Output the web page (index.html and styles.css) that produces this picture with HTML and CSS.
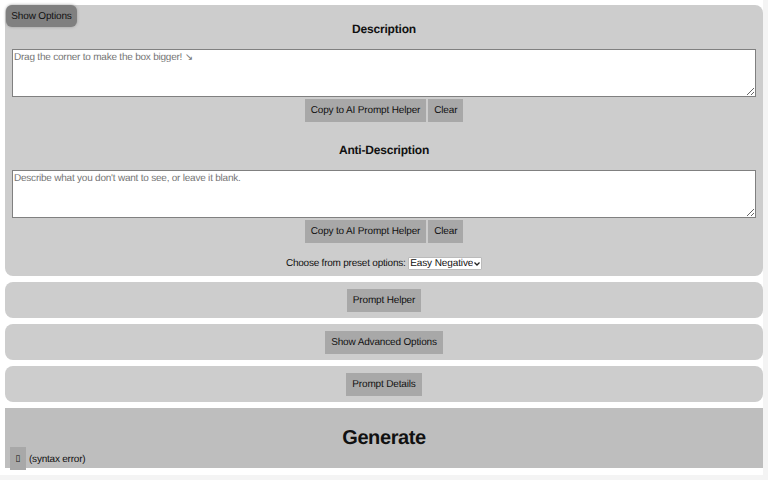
FILE: index.html
```html
<!DOCTYPE html>
<html lang="en">
<head>
  <meta charset="UTF-8">
  <meta name="viewport" content="width=device-width, initial-scale=1.0">
  <title>Prompt Page</title>
  <link rel="stylesheet" href="styles.css">
</head>
<body>

  <button class="show-options">Show Options</button>

  <div class="page">
    <div class="panel prompts">
      <div class="prompt-title">Description</div>
      <textarea class="prompt-box" placeholder="Drag the corner to make the box bigger! ↘"></textarea>
      <div class="button-row">
        <button class="btn">Copy to AI Prompt Helper</button>
        <button class="btn">Clear</button>
      </div>

      <div class="prompt-title second">Anti-Description</div>
      <textarea class="prompt-box" placeholder="Describe what you don't want to see, or leave it blank."></textarea>
      <div class="button-row">
        <button class="btn">Copy to AI Prompt Helper</button>
        <button class="btn">Clear</button>
      </div>

      <div class="preset-row">
        <label for="preset">Choose from preset options:</label>
        <span class="select-wrap">
          <select id="preset">
            <option>Easy Negative</option>
          </select>
          <svg class="select-arrow" width="6" height="4" viewBox="0 0 6 4"><path d="M0.5 0.5 L3 3 L5.5 0.5" fill="none" stroke="#222" stroke-width="1.3"/></svg>
        </span>
      </div>
    </div>

    <div class="panel single"><button class="btn">Prompt Helper</button></div>
    <div class="panel single"><button class="btn">Show Advanced Options</button></div>
    <div class="panel single"><button class="btn">Prompt Details</button></div>

    <div class="generate">Generate</div>
  </div>

  <div class="status">
    <button class="btn status-btn">▯</button>
    <span class="status-text">(syntax error)</span>
  </div>

</body>
</html>
```

FILE: styles.css
```css
html {
  background-color: #f4f4f4;
}

body {
  font-family: "Liberation Sans", Arial, sans-serif;
  font-size: 10px;
  letter-spacing: -0.22px;
  color: #111;
  background-color: #fff;
  margin: 0 5px 5px 0;
  height: 475px;
  overflow: hidden;
  position: relative;
  text-rendering: geometricPrecision;
}

.page {
  display: flex;
  flex-direction: column;
  gap: 6px;
  padding: 5px 0 0 5px;
}

.panel {
  background-color: #cdcdcd;
  border-radius: 8px;
  text-align: center;
}

.prompts {
  height: 271px;
  padding: 0 7px;
  box-sizing: border-box;
}

.prompt-title {
  font-size: 12px;
  letter-spacing: -0.2px;
  font-weight: bold;
  line-height: 15px;
  padding-top: 17px;
  margin-bottom: 12px;
}

.prompt-title.second {
  padding-top: 21px;
}

.prompt-box {
  display: block;
  width: 100%;
  height: 48px;
  box-sizing: border-box;
  margin: 0;
  padding: 2px 1px 1px;
  border: 1px solid #808080;
  background-color: #fff;
  font-family: "Liberation Sans", Arial, sans-serif;
  font-size: 10px;
  letter-spacing: -0.22px;
  text-rendering: geometricPrecision;
}

.button-row {
  display: flex;
  justify-content: center;
  gap: 2px;
  margin-top: 2px;
}

.btn {
  height: 23px;
  padding: 0 6px;
  border: none;
  background-color: #a8a8a8;
  color: #111;
  font-family: "Liberation Sans", Arial, sans-serif;
  font-size: 10px;
  letter-spacing: -0.16px;
  text-rendering: geometricPrecision;
}

.preset-row {
  margin-top: 14px;
  line-height: 14px;
}

.select-wrap {
  position: relative;
  display: inline-block;
  vertical-align: top;
  height: 14px;
}

select {
  appearance: none;
  width: 74px;
  height: 13px;
  margin: 0;
  padding: 0 8px 0 1px;
  border: 1px solid #bbb;
  border-radius: 1px;
  background-color: #fff;
  color: #111;
  font-family: "Liberation Sans", Arial, sans-serif;
  font-size: 10px;
  letter-spacing: -0.1px;
  text-rendering: geometricPrecision;
}

.select-arrow {
  position: absolute;
  right: 2px;
  top: 5px;
}

.single {
  height: 36px;
  display: flex;
  justify-content: center;
  align-items: center;
}

.generate {
  height: 60px;
  background-color: #bebebe;
  color: #111;
  font-size: 20px;
  letter-spacing: -0.4px;
  font-weight: bold;
  text-align: center;
  line-height: 60px;
}

.show-options {
  position: absolute;
  left: 6px;
  top: 5px;
  width: 71px;
  height: 22px;
  padding: 0;
  border: none;
  border-radius: 6px;
  background-color: #808080;
  color: #111;
  box-shadow: 0 0 3px #999;
  font-family: "Liberation Sans", Arial, sans-serif;
  font-size: 10px;
  letter-spacing: -0.16px;
  text-rendering: geometricPrecision;
}

.status {
  position: absolute;
  left: 10px;
  top: 447px;
  display: flex;
  align-items: center;
  gap: 3px;
}

.status-btn {
  width: 16px;
  padding: 0;
  font-size: 9px;
}

.status-text {
  margin-top: 2px;
}
```
